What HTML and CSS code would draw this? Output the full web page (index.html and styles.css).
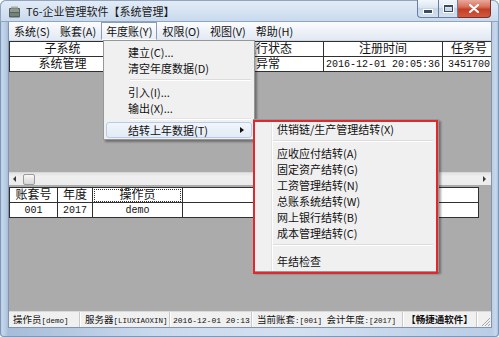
FILE: index.html
```html
<!DOCTYPE html>
<html lang="zh-CN">
<head>
<meta charset="utf-8">
<title>T6-企业管理软件【系统管理】</title>
<link rel="stylesheet" href="styles.css">
</head>
<body>
<div class="window">
  <div class="titlebar">
    <svg class="app-icon" width="13" height="12" viewBox="0 0 13 12">
      <rect x="1" y="2" width="11" height="9.5" rx="1" fill="#56625b"/>
      <rect x="2" y="3" width="9" height="3" fill="#8d9a91"/>
      <rect x="2" y="7" width="9" height="3" fill="#74837a"/>
      <rect x="3" y="0.5" width="7" height="2" fill="#a3b0a7"/>
    </svg>
    <span class="title">T6-企业管理软件【系统管理】</span>
    <div class="controls">
      <span class="wbtn min"><i></i></span>
      <span class="wbtn max"><i></i></span>
      <span class="wbtn close">
        <svg width="10" height="9" viewBox="0 0 10 9"><path d="M1 1 L9 8 M9 1 L1 8" stroke="#fff" stroke-width="2.2" stroke-linecap="round"/></svg>
      </span>
    </div>
  </div>
  <div class="inner">
    <nav class="menubar">
      <span class="mi">系统(S)</span>
      <span class="mi">账套(A)</span>
      <span class="mi open">年度账(Y)</span>
      <span class="mi">权限(O)</span>
      <span class="mi">视图(V)</span>
      <span class="mi">帮助(H)</span>
    </nav>
    <div class="client">
      <div class="pane upper">
        <table class="grid grid-top">
          <colgroup>
            <col class="u1"><col class="u2"><col class="u3"><col class="u4"><col class="u5">
          </colgroup>
          <tr>
            <td>子系统</td>
            <td></td>
            <td class="left">运行状态</td>
            <td>注册时间</td>
            <td>任务号</td>
          </tr>
          <tr>
            <td>系统管理</td>
            <td></td>
            <td class="left status">异常</td>
            <td class="mono">2016-12-01 20:05:36</td>
            <td class="mono">3451700</td>
          </tr>
        </table>
      </div>
      <div class="hscroll">
        <span class="sarrow left"></span>
        <span class="thumb"></span>
        <span class="strack"></span>
        <span class="sarrow right"></span>
      </div>
      <div class="pane lower">
        <table class="grid grid-bottom">
          <colgroup>
            <col class="l1"><col class="l2"><col class="l3"><col class="l4">
          </colgroup>
          <tr>
            <td>账套号</td>
            <td>年度</td>
            <td><span class="focus">操作员</span></td>
            <td></td>
          </tr>
          <tr>
            <td class="mono">001</td>
            <td class="mono">2017</td>
            <td class="mono">demo</td>
            <td></td>
          </tr>
        </table>
      </div>
    </div>
    <div class="statusbar">
      <span class="panel p1">操作员<span class="a">[demo]</span></span>
      <span class="panel p2">服务器<span class="a">[LIUXIAOXIN]</span></span>
      <span class="panel p3"><span class="a">2016-12-01 20:13</span></span>
      <span class="panel p4">当前账套<span class="a">:[001] </span>会计年度<span class="a">:[2017]</span></span>
      <span class="panel p5">【畅捷通软件】</span>
      <span class="grip">
        <svg width="12" height="12" viewBox="0 0 12 12">
          <path d="M11 3 L3 11 M11 6 L6 11 M11 9 L9 11" stroke="#a8a8a8" stroke-width="1"/>
        </svg>
      </span>
    </div>
  </div>

  <div class="dropdown">
    <div class="item">建立(C)...</div>
    <div class="item">清空年度数据(D)</div>
    <div class="sep"></div>
    <div class="item">引入(I)...</div>
    <div class="item">输出(X)...</div>
    <div class="sep small"></div>
    <div class="item hl sub">结转上年数据(T)</div>
  </div>

  <div class="submenu">
    <div class="item">供销链/生产管理结转(X)</div>
    <div class="sep"></div>
    <div class="item">应收应付结转(A)</div>
    <div class="item">固定资产结转(G)</div>
    <div class="item">工资管理结转(N)</div>
    <div class="item">总账系统结转(W)</div>
    <div class="item">网上银行结转(B)</div>
    <div class="item">成本管理结转(C)</div>
    <div class="sep big"></div>
    <div class="item">年结检查</div>
  </div>
</div>
</body>
</html>
```

FILE: styles.css
```css
* { box-sizing: border-box; margin: 0; padding: 0; }

html, body {
  width: 499px;
  height: 337px;
  overflow: hidden;
  background: #ffffff;
}

body {
  font-family: "Noto Sans CJK SC", "Liberation Sans", sans-serif;
  font-size: 11px;
  color: #000;
}

.window {
  position: relative;
  width: 499px;
  height: 337px;
  display: flex;
  flex-direction: column;
  padding: 0 7px 9px 8px;
  border-radius: 6px 6px 4px 4px;
  background: linear-gradient(90deg, #9db6d4 0, #c6d8ec 2px, #b4c9e3 6px, #a6bcd8 8px, #c9d9ec 30%, #d3e0f0 60%, #b9cde5 calc(100% - 7px), #c9d9ec calc(100% - 3px), #9db6d4 100%);
  box-shadow: inset 0 0 0 1px #7f97b6;
}

/* ---------- title bar ---------- */
.titlebar {
  height: 22px;
  margin: 0 -7px 0 -8px;
  padding: 0 8px;
  display: flex;
  align-items: center;
  border-radius: 6px 6px 0 0;
  background: linear-gradient(180deg, #e4edf7 0, #d6e3f2 50%, #c8d9ed 100%);
  box-shadow: inset 0 0 0 1px #8ea4c0;
}

.app-icon { flex: none; margin-top: 1px; }

.title {
  margin-left: 5px;
  font-size: 11px;
  line-height: 14px;
  color: #1a1a1a;
}

.controls {
  margin-left: auto;
  align-self: flex-start;
  display: flex;
  height: 19px;
}

.wbtn {
  height: 18px;
  display: flex;
  align-items: center;
  justify-content: center;
  border: 1px solid #6a7f9b;
  border-top: none;
  background: linear-gradient(180deg, #f3f7fc 0, #dbe5f1 45%, #c6d5e8 50%, #d3e0f0 100%);
}

.wbtn.min { width: 21px; border-radius: 0 0 0 4px; border-right: none; }
.wbtn.min i {
  display: block;
  width: 8px;
  height: 3px;
  margin-top: 6px;
  background: #3c4a5e;
  box-shadow: 0 0 0 1px #fff;
}

.wbtn.max { width: 20px; }
.wbtn.max i {
  display: block;
  width: 9px;
  height: 7px;
  border: 1px solid #3c4a5e;
  border-top-width: 2px;
  box-shadow: 0 0 0 1px #fff;
}

.wbtn.close {
  width: 33px;
  border-radius: 0 0 4px 0;
  border-left: none;
  border-color: #7a3026;
  background: linear-gradient(180deg, #e9a99b 0, #d8705b 40%, #c43d26 55%, #cf5a3f 100%);
}

/* ---------- inner area ---------- */
.inner {
  flex: 1;
  display: flex;
  flex-direction: column;
  border-left: 1px solid #8094ad;
  border-right: 1px solid #8094ad;
  border-bottom: 1px solid #8094ad;
}

.menubar {
  height: 19px;
  display: flex;
  background: linear-gradient(180deg, #fbfcfe 0, #eef2f8 50%, #e2e9f3 100%);
  border-bottom: 1px solid #cfd8e4;
}

.mi {
  height: 18px;
  padding: 0 4px;
  line-height: 16px;
  border: 1px solid transparent;
  white-space: nowrap;
  color: #111;
}

.mi.open {
  border-color: #8c9db3;
  border-bottom-color: transparent;
  background: linear-gradient(180deg, #fcfdfe 0, #eaeff6 100%);
}

/* ---------- client ---------- */
.client {
  flex: 1;
  display: flex;
  flex-direction: column;
  background: #ababab;
  overflow: hidden;
}

.pane { overflow: hidden; }
.pane.upper { height: 131px; flex: none; }
.pane.lower { flex: 1; padding-top: 2px; }

.grid {
  border-collapse: collapse;
  table-layout: fixed;
  font-family: "Liberation Sans", "Noto Sans CJK SC", sans-serif;
  font-size: 12px;
}

.grid tr { height: 15px; }

.grid td {
  height: 15px;
  padding: 0;
  line-height: 13px;
  border: 1px solid #303030;
  background: #fff;
  text-align: center;
  white-space: nowrap;
  overflow: hidden;
  color: #111;
}

.grid td.left { text-align: left; padding-left: 5px; }
.grid td.left.status { padding-left: 17px; }

.grid td.mono {
  font-family: "Liberation Mono", "DejaVu Sans Mono", monospace;
  font-size: 10px;
}

.grid-top { width: 486px; }
.u1 { width: 106px; }
.u2 { width: 123px; }
.u3 { width: 85px; }
.u4 { width: 119px; }
.u5 { width: 53px; }

.grid-bottom { width: 469px; }
.l1 { width: 48px; }
.l2 { width: 35px; }
.l3 { width: 90px; }
.l4 { width: 296px; }

.focus {
  display: block;
  margin: 0 1px;
  outline: 1px dotted #333;
  outline-offset: -1px;
}

/* ---------- horizontal scrollbar ---------- */
.hscroll {
  height: 13px;
  flex: none;
  display: flex;
  align-items: center;
  background: linear-gradient(180deg, #e3e3e3 0, #efefef 30%, #ececec 100%);
  border-top: 1px solid #d8d8d8;
}

.sarrow {
  width: 13px;
  height: 12px;
  position: relative;
  flex: none;
}

.sarrow::after {
  content: "";
  position: absolute;
  top: 3px;
  border-top: 3px solid transparent;
  border-bottom: 3px solid transparent;
}

.sarrow.left::after { left: 4px; border-right: 3px solid #3a3a3a; }
.sarrow.right::after { left: 5px; border-left: 3px solid #3a3a3a; }

.thumb {
  width: 12px;
  height: 11px;
  margin-left: 1px;
  border: 1px solid #9a9a9a;
  border-radius: 2px;
  background: linear-gradient(180deg, #fafafa 0, #e6e6e6 50%, #d6d6d6 100%);
}

.strack { flex: 1; }

/* ---------- status bar ---------- */
.statusbar {
  height: 16px;
  flex: none;
  display: flex;
  background: #f0f0f0;
  border-top: 1px solid #dadada;
  font-size: 9.5px;
  line-height: 15px;
  color: #111;
  white-space: nowrap;
}

.panel {
  overflow: hidden;
  border-right: 1px solid #c9c9c9;
  box-shadow: 1px 0 0 #ffffff;
  padding-left: 4px;
}

.panel .a {
  font-family: "Liberation Mono", "DejaVu Sans Mono", monospace;
  font-size: 7.5px;
}

.p1 { width: 71px; }
.p2 { width: 90px; padding-left: 5px; }
.p3 { width: 82px; padding-left: 3px; }
.p3 .a { font-size: 8px; }
.p4 { width: 151px; padding-left: 5px; }
.p5 { width: 74px; text-align: center; padding-left: 0; font-weight: bold; }

.grip {
  flex: 1;
  display: flex;
  align-items: flex-end;
  justify-content: flex-end;
}

/* ---------- drop-down menus ---------- */
.dropdown,
.submenu {
  position: absolute;
  background: #f0f0f0;
  border: 1px solid #979797;
  box-shadow: 2px 2px 2px rgba(0, 0, 0, 0.35);
  color: #111;
}

.dropdown {
  left: 103px;
  top: 40px;
  width: 152px;
  height: 100px;
  padding: 3px 2px 1px;
}

.submenu {
  left: 253px;
  top: 119px;
  width: 186px;
  height: 153px;
  padding: 1px 2px;
  background: linear-gradient(90deg, #f0f0f0 0, #f0f0f0 17px, #e2e3e3 17px, #e2e3e3 18px, #ffffff 18px, #ffffff 19px, #f0f0f0 19px);
}

.submenu::after {
  content: "";
  position: absolute;
  left: -1px;
  top: 0;
  width: 181px;
  height: 150px;
  border: 2px solid #e0282d;
  pointer-events: none;
}

.item {
  height: 16px;
  line-height: 16px;
  padding-left: 22px;
  white-space: nowrap;
  position: relative;
}

.submenu .item { padding-left: 21px; }

.item.hl {
  border: 1px solid #b6cde9;
  border-radius: 3px;
  background: linear-gradient(180deg, #f1f5fb 0, #e2ebf7 100%);
  padding-left: 21px;
  line-height: 14px;
}

.item.sub::after {
  content: "";
  position: absolute;
  right: 7px;
  top: 4px;
  border-top: 3.5px solid transparent;
  border-bottom: 3.5px solid transparent;
  border-left: 4px solid #111;
}

.sep {
  height: 8px;
  position: relative;
}

.sep::after {
  content: "";
  position: absolute;
  left: 24px;
  right: 1px;
  top: 3px;
  height: 1px;
  background: #dcdcdc;
  box-shadow: 0 1px 0 #ffffff;
}

.sep.small { height: 6px; }
.sep.small::after { top: 2px; background: #e4e4e4; }

.submenu .sep::after { left: 17px; right: 3px; }
.sep.big { height: 12px; }
```
